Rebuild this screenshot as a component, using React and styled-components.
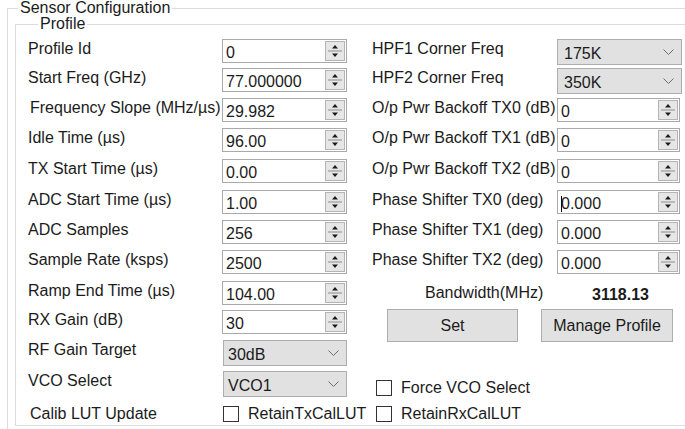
import React from 'react';
import styled, { createGlobalStyle } from 'styled-components';

const GlobalStyle = createGlobalStyle`
    html, body {
        margin: 0;
        padding: 0;
        overflow: hidden;
        background: #ffffff;
    }
    body {
        font-family: "Liberation Sans", Arial, sans-serif;
        font-size: 16px;
        color: #1b1b1b;
    }
`;

const OuterGroup = styled.fieldset`
    box-sizing: border-box;
    width: 680px;
    margin: 0 0 0 7px;
    padding: 0 0 4px 0;
    border: 1px solid #dcdcdc;
    min-width: 0;
`;

const InnerGroup = styled.fieldset`
    margin: 0 0 0 7px;
    padding: 7px 0 0 12px;
    border: 1px solid #dcdcdc;
    min-width: 0;
`;

const Legend = styled.legend`
    margin-left: 10px;
    padding: 0 2px;
    font-size: 16px;
    line-height: 16px;
`;

const Row = styled.div`
    display: grid;
    grid-template-columns: 194px 125px 210px 125px;
    align-items: start;
    height: ${props => props.$h}px;
`;

const Label = styled.div`
    margin-left: ${props => props.$dx || 0}px;
    margin-top: ${props => (props.$dy === undefined ? 1 : props.$dy)}px;
    line-height: 18px;
    white-space: nowrap;
    font-weight: ${props => (props.$bold ? 'bold' : 'normal')};
`;

const Field = styled.div`
    box-sizing: border-box;
    display: flex;
    align-items: center;
    width: ${props => props.$w}px;
    height: 24px;
    border: 1px solid #a9a9a9;
    background: #ffffff;
    padding-left: 3px;
`;

const FieldText = styled.span`
    flex: 1;
    padding-top: 4px;
    line-height: 18px;
    white-space: nowrap;
`;

const Caret = styled.span`
    display: inline-block;
    width: 1px;
    height: 16px;
    margin-right: -1px;
    vertical-align: -3px;
    background: #000000;
`;

const Spin = styled.svg`
    flex: none;
    margin-right: 1px;
`;

const Select = styled.div`
    box-sizing: border-box;
    display: flex;
    align-items: center;
    justify-content: space-between;
    width: ${props => props.$w}px;
    height: 26px;
    margin-left: ${props => props.$dx || 0}px;
    border: 1px solid #adadad;
    background: #e1e1e1;
    padding: 0 7px 0 ${props => props.$pl || 4}px;
`;

const SelectText = styled.span`
    padding-top: 4px;
    line-height: 18px;
`;

const ButtonBar = styled.div`
    grid-column: span 2;
    display: flex;
    gap: 23px;
    padding-left: 40px;
    margin-top: -1px;
`;

const Button = styled.div`
    box-sizing: border-box;
    display: flex;
    align-items: center;
    justify-content: center;
    width: ${props => props.$w}px;
    height: 33px;
    border: 1px solid #adadad;
    background: #e1e1e1;
    line-height: 18px;
`;

const Check = styled.div`
    display: flex;
    align-items: center;
    gap: 9px;
    margin-left: ${props => props.$dx || 0}px;
    margin-top: ${props => props.$dy || 0}px;
    white-space: nowrap;
    line-height: 18px;
`;

const Box = styled.span`
    box-sizing: border-box;
    flex: none;
    width: 16px;
    height: 16px;
    border: 1px solid #333333;
    background: #ffffff;
`;

const Empty = styled.span``;

function Spinner() {
    return (
        <Spin width="20" height="20" viewBox="0 0 20 20">
            <rect x="0.5" y="0.5" width="19" height="19" fill="#e6e6e6" stroke="#b4b4b4" />
            <line x1="3" y1="10" x2="17" y2="10" stroke="#8c8c8c" />
            <polygon points="7,7.5 13,7.5 10,4" fill="#1a1a1a" />
            <polygon points="7,12.5 13,12.5 10,16" fill="#1a1a1a" />
        </Spin>
    );
}

function Chevron() {
    return (
        <svg width="11" height="6" viewBox="0 0 11 6">
            <polyline points="0.5,0.5 5.5,5.5 10.5,0.5" fill="none" stroke="#6e6e6e" strokeWidth="1" />
        </svg>
    );
}

function NumField({ value, width, caret }) {
    return (
        <Field $w={width}>
            <FieldText>{caret && <Caret />}{value}</FieldText>
            <Spinner />
        </Field>
    );
}

function Dropdown({ value, width, dx, pl }) {
    return (
        <Select $w={width} $dx={dx} $pl={pl}>
            <SelectText>{value}</SelectText>
            <Chevron />
        </Select>
    );
}

function CheckItem({ label, dx, dy }) {
    return (
        <Check $dx={dx} $dy={dy}>
            <Box />
            <span>{label}</span>
        </Check>
    );
}

// rows that hold a spin box on the left and a list or spin box on the right
const fieldRows = [
    { h: 29, left: 'Profile Id', value: '0', right: 'HPF1 Corner Freq', rightValue: '175K', select: true },
    { h: 30, left: 'Start Freq (GHz)', value: '77.000000', right: 'HPF2 Corner Freq', rightValue: '350K', select: true },
    { h: 30, left: 'Frequency Slope (MHz/µs)', value: '29.982', dx: 2, right: 'O/p Pwr Backoff TX0 (dB)', rightValue: '0' },
    { h: 31, left: 'Idle Time (µs)', value: '96.00', right: 'O/p Pwr Backoff TX1 (dB)', rightValue: '0' },
    { h: 31, left: 'TX Start Time (µs)', value: '0.00', right: 'O/p Pwr Backoff TX2 (dB)', rightValue: '0' },
    { h: 30, left: 'ADC Start Time (µs)', value: '1.00', right: 'Phase Shifter TX0 (deg)', rightValue: '0.000', caret: true },
    { h: 30, left: 'ADC Samples', value: '256', right: 'Phase Shifter TX1 (deg)', rightValue: '0.000' },
    { h: 31, left: 'Sample Rate (ksps)', value: '2500', right: 'Phase Shifter TX2 (deg)', rightValue: '0.000' },
];

export default function App() {
    return (
        <>
            <GlobalStyle />
            <OuterGroup>
                <Legend>Sensor Configuration</Legend>
                <InnerGroup>
                    <Legend>Profile</Legend>

                    {fieldRows.map(row => (
                        <Row key={row.left} $h={row.h}>
                            <Label $dx={row.dx}>{row.left}</Label>
                            <NumField value={row.value} width={125} />
                            <Label $dx={25}>{row.right}</Label>
                            {row.select
                                ? <Dropdown value={row.rightValue} width={125} pl={6} />
                                : <NumField value={row.rightValue} width={123} caret={row.caret} />}
                        </Row>
                    ))}

                    <Row $h={29}>
                        <Label>{'Ramp End Time (µs)'}</Label>
                        <NumField value="104.00" width={125} />
                        <Label $dx={78} $dy={3}>Bandwidth(MHz)</Label>
                        <Label $dx={35} $dy={5} $bold>3118.13</Label>
                    </Row>

                    <Row $h={30}>
                        <Label>RX Gain (dB)</Label>
                        <NumField value="30" width={125} />
                        <ButtonBar>
                            <Button $w={131}>Set</Button>
                            <Button $w={132}>Manage Profile</Button>
                        </ButtonBar>
                    </Row>

                    <Row $h={31}>
                        <Label>RF Gain Target</Label>
                        <Dropdown value="30dB" width={124} dx={1} />
                    </Row>

                    <Row $h={34}>
                        <Label>VCO Select</Label>
                        <Dropdown value="VCO1" width={124} dx={1} />
                        <CheckItem label="Force VCO Select" dx={29} dy={8} />
                        <Empty />
                    </Row>

                    <Row $h={20}>
                        <Label $dx={2} $dy={0}>Calib LUT Update</Label>
                        <CheckItem label="RetainTxCalLUT" dx={1} />
                        <CheckItem label="RetainRxCalLUT" dx={29} />
                        <Empty />
                    </Row>
                </InnerGroup>
            </OuterGroup>
        </>
    );
}
